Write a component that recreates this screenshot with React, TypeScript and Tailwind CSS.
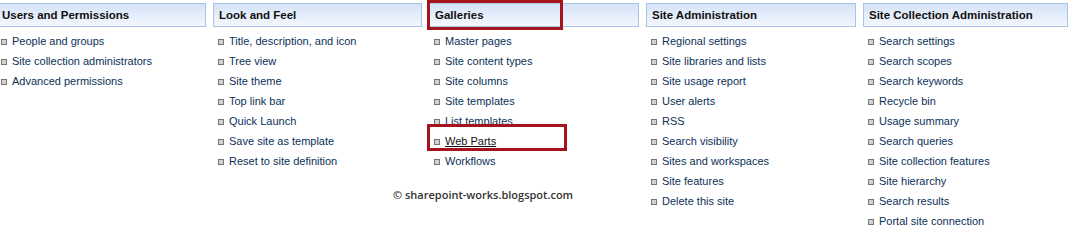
const sections: { title: string; items: string[] }[] = [
  { title: "Users and Permissions", items: ["People and groups", "Site collection administrators", "Advanced permissions"] },
  {
    title: "Look and Feel",
    items: ["Title, description, and icon", "Tree view", "Site theme", "Top link bar", "Quick Launch", "Save site as template", "Reset to site definition"],
  },
  {
    title: "Galleries",
    items: ["Master pages", "Site content types", "Site columns", "Site templates", "List templates", "Web Parts", "Workflows"],
  },
  {
    title: "Site Administration",
    items: ["Regional settings", "Site libraries and lists", "Site usage report", "User alerts", "RSS", "Search visibility", "Sites and workspaces", "Site features", "Delete this site"],
  },
  {
    title: "Site Collection Administration",
    items: ["Search settings", "Search scopes", "Search keywords", "Recycle bin", "Usage summary", "Search queries", "Site collection features", "Site hierarchy", "Search results", "Portal site connection"],
  },
];

function Bullet() {
  return <span className="mt-[1px] h-[6px] w-[6px] shrink-0 border border-[#777] bg-[#d2d2d2]" />;
}

export default function App() {
  return (
    <div className="relative h-[228px] w-[1071px] overflow-hidden bg-white font-['Liberation_Sans',Arial,sans-serif]">
      <div className="-ml-[4px] grid grid-cols-[210px_209px_210px_210px_205px] gap-x-[7px] pt-[3px]">
        {sections.map((s) => (
          <div key={s.title}>
            <div className="flex h-[24px] items-center border border-[#a8c4e6] bg-gradient-to-b from-[#d5e3f7] to-[#f3f7fd] pl-[5px] pt-[1px] text-[11.5px] font-bold text-[#111]">
              {s.title}
            </div>
            <ul className="mt-[4px]">
              {s.items.map((it) => (
                <li key={it} className="flex h-[20px] items-center gap-[5px] pl-[5px] text-[11px] text-[#0b3157]">
                  <Bullet />
                  <span className={it === "Web Parts" ? "text-[#111] underline" : ""}>{it}</span>
                </li>
              ))}
            </ul>
          </div>
        ))}
      </div>

      {/* highlight boxes */}
      <div className="absolute left-[427px] top-0 h-[30px] w-[136px] border-[3px] border-[#a3141c]" />
      <div className="absolute left-[427px] top-[124px] h-[27px] w-[140px] border-[3px] border-[#a3141c]" />

      <div className="absolute left-[393px] top-[187px] font-['Open_Sans',sans-serif] text-[11px] font-semibold text-[#333]">
        © sharepoint-works.blogspot.com
      </div>
    </div>
  );
}
